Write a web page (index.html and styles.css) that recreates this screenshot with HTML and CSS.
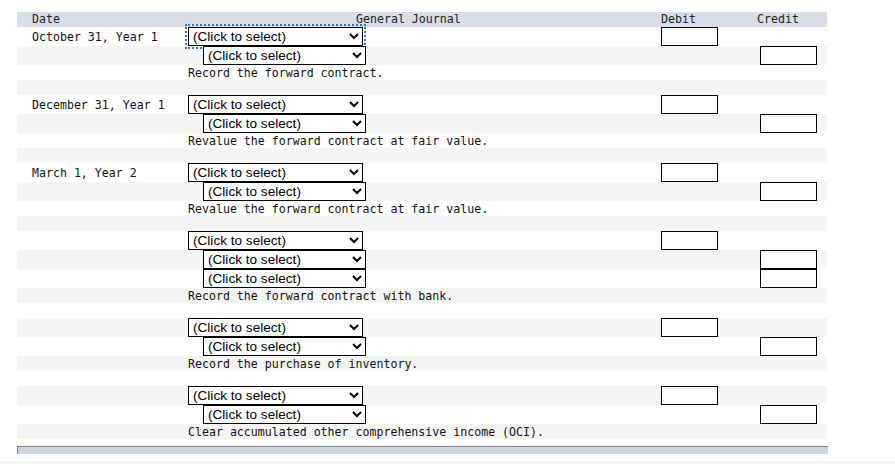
FILE: index.html
```html
<!DOCTYPE html>
<html>
<head>
<meta charset="utf-8">
<link rel="stylesheet" href="styles.css">
</head>
<body>
<div class="page">
  <div class="journal">
    <div class="row head">
      <div class="c-date">Date</div>
      <div class="c-acct head-title">General Journal</div>
      <div class="c-debit">Debit</div>
      <div class="c-credit">Credit</div>
    </div>
    <div class="rows">
      <!-- block 1 -->
      <div class="row sel"><div class="c-date">October 31, Year 1</div><div class="c-acct"><select class="acct focused"><option>(Click to select)</option></select></div><div class="c-debit"><input class="amt" type="text"></div><div class="c-credit"></div></div>
      <div class="row sel"><div class="c-date"></div><div class="c-acct"><select class="acct indent"><option>(Click to select)</option></select></div><div class="c-debit"></div><div class="c-credit"><input class="amt" type="text"></div></div>
      <div class="row note"><div class="c-date"></div><div class="c-acct">Record the forward contract.</div><div class="c-debit"></div><div class="c-credit"></div></div>
      <div class="row spacer"></div>
      <!-- block 2 -->
      <div class="row sel"><div class="c-date">December 31, Year 1</div><div class="c-acct"><select class="acct"><option>(Click to select)</option></select></div><div class="c-debit"><input class="amt" type="text"></div><div class="c-credit"></div></div>
      <div class="row sel"><div class="c-date"></div><div class="c-acct"><select class="acct indent"><option>(Click to select)</option></select></div><div class="c-debit"></div><div class="c-credit"><input class="amt" type="text"></div></div>
      <div class="row note"><div class="c-date"></div><div class="c-acct">Revalue the forward contract at fair value.</div><div class="c-debit"></div><div class="c-credit"></div></div>
      <div class="row spacer"></div>
      <!-- block 3 -->
      <div class="row sel"><div class="c-date">March 1, Year 2</div><div class="c-acct"><select class="acct"><option>(Click to select)</option></select></div><div class="c-debit"><input class="amt" type="text"></div><div class="c-credit"></div></div>
      <div class="row sel"><div class="c-date"></div><div class="c-acct"><select class="acct indent"><option>(Click to select)</option></select></div><div class="c-debit"></div><div class="c-credit"><input class="amt" type="text"></div></div>
      <div class="row note"><div class="c-date"></div><div class="c-acct">Revalue the forward contract at fair value.</div><div class="c-debit"></div><div class="c-credit"></div></div>
      <div class="row spacer"></div>
      <!-- block 4 -->
      <div class="row sel"><div class="c-date"></div><div class="c-acct"><select class="acct"><option>(Click to select)</option></select></div><div class="c-debit"><input class="amt" type="text"></div><div class="c-credit"></div></div>
      <div class="row sel"><div class="c-date"></div><div class="c-acct"><select class="acct indent"><option>(Click to select)</option></select></div><div class="c-debit"></div><div class="c-credit"><input class="amt" type="text"></div></div>
      <div class="row sel"><div class="c-date"></div><div class="c-acct"><select class="acct indent"><option>(Click to select)</option></select></div><div class="c-debit"></div><div class="c-credit"><input class="amt" type="text"></div></div>
      <div class="row note"><div class="c-date"></div><div class="c-acct">Record the forward contract with bank.</div><div class="c-debit"></div><div class="c-credit"></div></div>
      <div class="row spacer"></div>
      <!-- block 5 -->
      <div class="row sel"><div class="c-date"></div><div class="c-acct"><select class="acct"><option>(Click to select)</option></select></div><div class="c-debit"><input class="amt" type="text"></div><div class="c-credit"></div></div>
      <div class="row sel"><div class="c-date"></div><div class="c-acct"><select class="acct indent"><option>(Click to select)</option></select></div><div class="c-debit"></div><div class="c-credit"><input class="amt" type="text"></div></div>
      <div class="row note"><div class="c-date"></div><div class="c-acct">Record the purchase of inventory.</div><div class="c-debit"></div><div class="c-credit"></div></div>
      <div class="row spacer"></div>
      <!-- block 6 -->
      <div class="row sel"><div class="c-date"></div><div class="c-acct"><select class="acct"><option>(Click to select)</option></select></div><div class="c-debit"><input class="amt" type="text"></div><div class="c-credit"></div></div>
      <div class="row sel"><div class="c-date"></div><div class="c-acct"><select class="acct indent"><option>(Click to select)</option></select></div><div class="c-debit"></div><div class="c-credit"><input class="amt" type="text"></div></div>
      <div class="row note"><div class="c-date"></div><div class="c-acct">Clear accumulated other comprehensive income (OCI).</div><div class="c-debit"></div><div class="c-credit"></div></div>
    </div>
    <div class="gap"></div>
    <div class="footbar"></div>
  </div>
  <div class="bottom-line"></div>
</div>
</body>
</html>
```

FILE: styles.css
```css
html, body {
  margin: 0;
  padding: 0;
  background: #ffffff;
}

.page {
  padding-top: 12px;
}

.journal {
  margin-left: 17px;
  width: 810px;
  font-family: "DejaVu Sans Mono", "Liberation Mono", monospace;
  font-size: 11.6px;
  color: #111;
}

.row {
  display: grid;
  grid-template-columns: 171px 472px 97px 70px;
  align-items: center;
}

.head {
  height: 15px;
  background: #d9dde7;
  color: #222;
  line-height: 15px;
}

.head-title {
  padding-left: 168px;
}

.head .c-debit {
  padding-left: 1px;
}

.rows > .row:nth-child(even) {
  background: #f5f5f5;
}

.rows > .row:nth-child(odd) {
  background: #ffffff;
}

.sel {
  height: 19px;
}

.note {
  height: 15px;
  line-height: 16px;
}

.spacer {
  height: 15px;
}

.c-date {
  padding-left: 15px;
  white-space: nowrap;
}

.sel .c-acct,
.sel .c-debit,
.sel .c-credit {
  height: 19px;
  display: flex;
  align-items: stretch;
}

.note .c-acct {
  white-space: nowrap;
}

.acct {
  box-sizing: border-box;
  width: 175px;
  height: 19px;
  margin: 0;
  padding: 0;
  border: 1px solid #000;
  border-radius: 0;
  background-color: #fff;
  color: #000;
  font-family: "Liberation Sans", Arial, sans-serif;
  font-size: 13.6px;
}

.acct.indent {
  width: 163px;
  margin-left: 15px;
}

.acct.focused {
  outline: 2px dotted #3d6fb6;
  outline-offset: 1px;
}

.amt {
  box-sizing: border-box;
  width: 57px;
  height: 19px;
  margin: 0;
  padding: 0;
  border: 1px solid #000;
  border-radius: 0;
  background: #fff;
}

.c-debit .amt {
  margin-left: 1px;
}

.c-credit .amt {
  margin-left: 3px;
}

.gap {
  height: 7px;
}

.footbar {
  width: 810px;
  height: 7px;
  background: #ced3e1;
  border-top: 1px solid #7d838d;
  border-left: 1px solid #7d838d;
}

.bottom-line {
  margin-top: 8px;
  height: 1px;
  background: #ececec;
}
```
